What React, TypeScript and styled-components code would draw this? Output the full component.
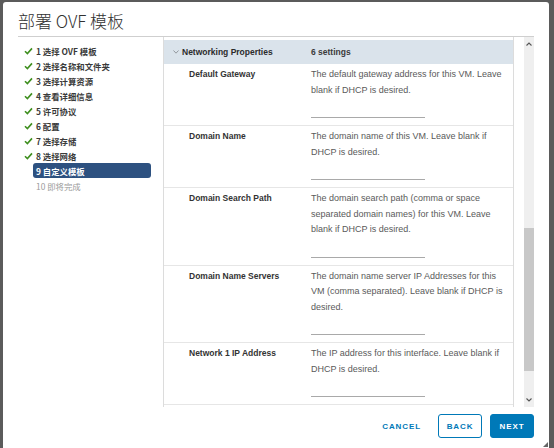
import React from "react";
import styled, { createGlobalStyle } from "styled-components";

const GlobalStyle = createGlobalStyle`
  html, body {
    margin: 0;
    padding: 0;
    background: #5b5b5b;
    overflow: hidden;
  }
  body {
    font-family: "Liberation Sans", "Noto Sans CJK SC", sans-serif;
  }
`;

const Backdrop = styled.div`
  width: 554px;
  height: 448px;
  padding: 2px 5px 0 3px;
  box-sizing: border-box;
`;

const Dialog = styled.div`
  width: 546px;
  height: 446px;
  background: #fff;
  border-radius: 3px 3px 0 0;
  display: flex;
  flex-direction: column;
  position: relative;
`;

const Header = styled.div`
  margin: 0 15px;
  height: 34px;
  border-bottom: 1px solid #cfcfcf;
  display: flex;
  align-items: flex-end;
`;

const Title = styled.h1`
  margin: 0 0 4px 0;
  font-family: "Noto Sans CJK SC", "Liberation Sans", sans-serif;
  font-weight: 300;
  font-size: 17px;
  line-height: 22px;
  color: #313131;
`;

const Body = styled.div`
  margin: 0 15px;
  height: 370px;
  display: flex;
`;

const Nav = styled.ol`
  list-style: none;
  margin: 0;
  padding: 6px 0 0 0;
  width: 146px;
  border-right: 1px solid #dcdcdc;
  box-sizing: border-box;
`;

const NavItem = styled.li<{ $state: "done" | "current" | "todo" }>`
  height: 15px;
  display: flex;
  align-items: center;
  gap: 3px;
  font-family: "Noto Sans CJK SC", "Liberation Sans", sans-serif;
  font-size: 8.4px;
  font-weight: ${(p) => (p.$state === "todo" ? 400 : 700)};
  color: ${(p) =>
    p.$state === "current" ? "#fff" : p.$state === "todo" ? "#9a9a9a" : "#3a3a3a"};
  padding-left: ${(p) => (p.$state === "done" ? "6px" : p.$state === "current" ? "3px" : "18px")};
  margin: ${(p) => (p.$state === "current" ? "0 12px 0 15px" : "0")};
  background: ${(p) => (p.$state === "current" ? "#2d5180" : "transparent")};
  border-radius: 3px;
  white-space: nowrap;
`;

const CheckMark = styled.svg`
  width: 9px;
  height: 8px;
  flex: none;
`;

const Content = styled.div`
  flex: 1;
  display: flex;
  gap: 10px;
`;

const List = styled.div`
  width: 350px;
  border-right: 1px solid #dcdcdc;
  box-sizing: border-box;
  padding-top: 3px;
  overflow: hidden;
`;

const GroupHeader = styled.div`
  height: 24px;
  background: #dae3eb;
  display: grid;
  grid-template-columns: 147px 1fr;
  align-items: center;
  font-size: 8.5px;
  color: #2b2b2b;
`;

const GroupTitle = styled.div`
  display: flex;
  align-items: center;
  gap: 3px;
  padding-left: 9px;
  font-weight: 700;
`;

const Caret = styled.svg`
  width: 6px;
  height: 4px;
  flex: none;
`;

const GroupCount = styled.div`
  font-weight: 700;
  color: #3a3a3a;
`;

const Row = styled.div`
  display: grid;
  grid-template-columns: 122px 1fr;
  padding: 3px 0 7px 25px;
  border-bottom: 1px solid #e6e6e6;
`;

const Label = styled.div`
  font-size: 8.5px;
  font-weight: 700;
  line-height: 15.5px;
  color: #333;
`;

const Field = styled.div`
  display: flex;
  flex-direction: column;
`;

const Description = styled.div`
  font-size: 9px;
  line-height: 15.5px;
  color: #5a5a5a;
  white-space: nowrap;
`;

const TextInput = styled.div`
  width: 114px;
  height: 19px;
  border-bottom: 1px solid #a9a9a9;
`;

const Scrollbar = styled.div`
  width: 10px;
  background: #efefef;
  display: flex;
  flex-direction: column;
  align-items: center;
`;

const ScrollArrow = styled.svg`
  width: 6px;
  height: 4px;
  margin: 5px 0;
  flex: none;
`;

const Track = styled.div`
  flex: 1;
  width: 100%;
  display: flex;
  flex-direction: column;
`;

const Thumb = styled.div`
  margin-top: 177px;
  height: 143px;
  width: 100%;
  background: #c8c8c8;
`;

const Footer = styled.div`
  flex: 1;
  display: flex;
  justify-content: flex-end;
  align-items: flex-start;
  gap: 8px;
  padding: 7px 15px 0 0;
`;

const Button = styled.button<{ $variant: "flat" | "outline" | "solid" }>`
  height: 24px;
  min-width: 44px;
  padding: 0 ${(p) => (p.$variant === "flat" ? "8px" : "0")};
  border-radius: 3px;
  border: 1px solid ${(p) => (p.$variant === "flat" ? "transparent" : "#0079b8")};
  background: ${(p) => (p.$variant === "solid" ? "#0079b8" : "#fff")};
  color: ${(p) => (p.$variant === "solid" ? "#fff" : "#0079b8")};
  font-family: "Liberation Sans", sans-serif;
  font-size: 8px;
  font-weight: 700;
  letter-spacing: 0.9px;
  text-transform: uppercase;
  white-space: nowrap;
  cursor: pointer;
`;

const ResizeGrip = styled.svg`
  position: absolute;
  right: 1px;
  bottom: 1px;
  width: 5px;
  height: 5px;
`;

const steps = [
  "1 选择 OVF 模板",
  "2 选择名称和文件夹",
  "3 选择计算资源",
  "4 查看详细信息",
  "5 许可协议",
  "6 配置",
  "7 选择存储",
  "8 选择网络",
  "9 自定义模板",
  "10 即将完成",
];
const currentStep = 8;

const settings: { label: string; lines: string[] }[] = [
  {
    label: "Default Gateway",
    lines: ["The default gateway address for this VM. Leave", "blank if DHCP is desired."],
  },
  {
    label: "Domain Name",
    lines: ["The domain name of this VM. Leave blank if", "DHCP is desired."],
  },
  {
    label: "Domain Search Path",
    lines: [
      "The domain search path (comma or space",
      "separated domain names) for this VM. Leave",
      "blank if DHCP is desired.",
    ],
  },
  {
    label: "Domain Name Servers",
    lines: [
      "The domain name server IP Addresses for this",
      "VM (comma separated). Leave blank if DHCP is",
      "desired.",
    ],
  },
  {
    label: "Network 1 IP Address",
    lines: ["The IP address for this interface. Leave blank if", "DHCP is desired."],
  },
];

const Check = () => (
  <CheckMark viewBox="0 0 9 8">
    <polyline points="1,4.2 3.4,6.6 8,1.4" fill="none" stroke="#3f8f1f" strokeWidth="1.6" />
  </CheckMark>
);

export default function App() {
  return (
    <>
      <GlobalStyle />
      <Backdrop>
        <Dialog>
          <Header>
            <Title>部署 OVF 模板</Title>
          </Header>
          <Body>
            <Nav>
              {steps.map((s, i) => {
                const state = i < currentStep ? "done" : i === currentStep ? "current" : "todo";
                return (
                  <NavItem key={s} $state={state}>
                    {state === "done" && <Check />}
                    <span>{s}</span>
                  </NavItem>
                );
              })}
            </Nav>
            <Content>
              <List>
                <GroupHeader>
                  <GroupTitle>
                    <Caret viewBox="0 0 6 4">
                      <polyline points="0.5,0.5 3,3.2 5.5,0.5" fill="none" stroke="#8a8f94" strokeWidth="0.9" />
                    </Caret>
                    Networking Properties
                  </GroupTitle>
                  <GroupCount>6 settings</GroupCount>
                </GroupHeader>
                {settings.map((s) => (
                  <Row key={s.label}>
                    <Label>{s.label}</Label>
                    <Field>
                      <Description>
                        {s.lines.map((l, i) => (
                          <div key={i}>{l}</div>
                        ))}
                      </Description>
                      <TextInput />
                    </Field>
                  </Row>
                ))}
              </List>
              <Scrollbar>
                <ScrollArrow viewBox="0 0 6 4">
                  <polyline points="0.5,3.5 3,1 5.5,3.5" fill="none" stroke="#555" strokeWidth="1.1" />
                </ScrollArrow>
                <Track>
                  <Thumb />
                </Track>
                <ScrollArrow viewBox="0 0 6 4">
                  <polyline points="0.5,0.5 3,3 5.5,0.5" fill="none" stroke="#555" strokeWidth="1.1" />
                </ScrollArrow>
              </Scrollbar>
            </Content>
          </Body>
          <Footer>
            <Button $variant="flat">Cancel</Button>
            <Button $variant="outline">Back</Button>
            <Button $variant="solid">Next</Button>
          </Footer>
          <ResizeGrip viewBox="0 0 5 5">
            <polygon points="5,0 5,5 0,5" fill="#666" />
          </ResizeGrip>
        </Dialog>
      </Backdrop>
    </>
  );
}
